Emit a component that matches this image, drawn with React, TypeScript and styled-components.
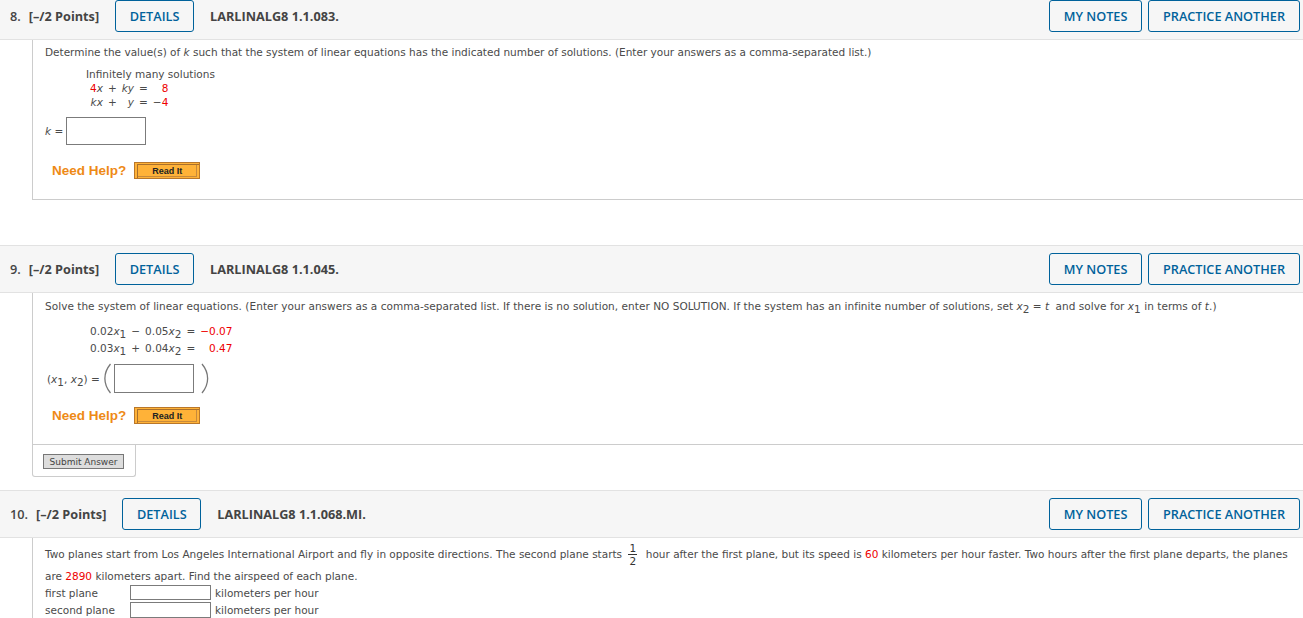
import React from 'react';
import styled, { createGlobalStyle } from 'styled-components';

const GlobalStyle = createGlobalStyle`
    html, body {
        margin: 0;
        padding: 0;
        height: 618px;
        overflow: hidden;
        background: #fff;
    }
`;

const Page = styled.main`
    margin-top: -8px;
    font-family: 'DejaVu Sans', Verdana, sans-serif;
    font-size: 10.5px;
    color: #4a4a4a;
`;

const Question = styled.section<{ $gap: number }>`
    margin-bottom: ${(p) => p.$gap}px;
`;

const Header = styled.header`
    display: flex;
    align-items: center;
    height: 46px;
    padding: 0 3px 0 10px;
    background: #f6f6f6;
    border-top: 1px solid #e2e2e2;
    border-bottom: 1px solid #e2e2e2;
    font-family: 'Open Sans', sans-serif;
    font-size: 12.7px;
    color: #444;
`;

const Number = styled.span`
    font-weight: 600;
    margin-right: 8px;
`;

const Points = styled.span`
    font-weight: 700;
    margin-right: 16px;
`;

const OutlineButton = styled.button<{ $pad?: number }>`
    height: 32px;
    padding: 0 ${(p) => p.$pad ?? 13.6}px;
    background: transparent;
    border: 1px solid #00629b;
    border-radius: 3px;
    color: #00629b;
    font-family: 'Open Sans', sans-serif;
    font-size: 12.7px;
    font-weight: 600;
`;

const Code = styled.span`
    font-weight: 700;
    margin-left: 16px;
    color: #444;
`;

const Actions = styled.div`
    display: flex;
    gap: 6px;
    margin-left: auto;
`;

const Body = styled.div<{ $height: number; $closed?: boolean }>`
    display: flow-root;
    margin-left: 32px;
    height: ${(p) => p.$height}px;
    padding: 0 12px;
    border-left: 1px solid #ccc;
    border-bottom: ${(p) => (p.$closed ? '1px solid #ccc' : 'none')};
`;

const Prompt = styled.p<{ $top: number; $track?: number }>`
    margin: ${(p) => p.$top}px 0 0;
    line-height: 13px;
    letter-spacing: ${(p) => p.$track ?? 0}px;
    white-space: nowrap;
`;

const Lead = styled.p`
    margin: 8px 0 0 41px;
    line-height: 14px;
`;

const Equations = styled.div<{ $top: number; $row: number }>`
    display: grid;
    width: max-content;
    margin: ${(p) => p.$top}px 0 0 45px;
    grid-template-columns: repeat(5, auto);
    grid-auto-rows: ${(p) => p.$row}px;
    column-gap: 5px;
    align-items: center;
    justify-items: end;
    white-space: nowrap;
`;

const Red = styled.span`
    color: #ee0000;
`;

const V = styled.i<{ $after?: number }>`
    font-style: italic;
    margin-right: ${(p) => p.$after ?? 0}px;
`;

const Sub = styled.sub`
    font-size: 10.5px;
    line-height: 0;
    vertical-align: -3px;
`;

const AnswerRow = styled.div<{ $top: number }>`
    display: flex;
    align-items: center;
    margin-top: ${(p) => p.$top}px;
`;

const AnswerLabel = styled.span<{ $indent?: number }>`
    margin: 0 3px 0 ${(p) => p.$indent ?? 0}px;
`;

const TextBox = styled.input<{ $w: number; $h: number }>`
    box-sizing: border-box;
    width: ${(p) => p.$w}px;
    height: ${(p) => p.$h}px;
    margin: 0;
    padding: 0;
    background: #fff;
    border: 1px solid #7b7b7b;
`;

const Paren = styled.svg`
    flex: none;
    display: block;
`;

const HelpRow = styled.div<{ $top: number }>`
    display: flex;
    align-items: center;
    gap: 8px;
    margin: ${(p) => p.$top}px 0 0 7px;
`;

const NeedHelp = styled.span`
    font-family: 'Liberation Sans', Arial, sans-serif;
    font-size: 13.5px;
    font-weight: 700;
    color: #ee8a16;
`;

const ReadIt = styled.button`
    box-sizing: border-box;
    width: 66px;
    height: 17px;
    padding: 0;
    background: #ffb238;
    border: 1px solid #b9772a;
    box-shadow: inset 2px 1px 0 #ffb238, inset 3px 2px 0 #a9702c, inset -2px -1px 0 #ffb238, inset -3px -2px 0 #c78a3c;
    font-family: 'Liberation Sans', Arial, sans-serif;
    font-size: 9px;
    font-weight: 700;
    color: #222;
`;

const SubmitBar = styled.div`
    box-sizing: border-box;
    margin-left: 32px;
    width: 104px;
    height: 32px;
    padding: 9px 0 0 10px;
    border: 1px solid #ccc;
    border-top: none;
    border-radius: 0 0 3px 3px;
`;

const SubmitButton = styled.button`
    box-sizing: border-box;
    display: block;
    width: 81px;
    height: 15px;
    padding: 0;
    background: #ddd;
    border: 1px solid #777;
    font-family: 'DejaVu Sans', Verdana, sans-serif;
    font-size: 9px;
    color: #444;
`;

const Fraction = styled.span`
    display: inline-flex;
    flex-direction: column;
    align-items: center;
    width: 9px;
    margin: 0 5px 0 3px;
    vertical-align: middle;
    line-height: 12px;
    color: #333;
`;

const Numerator = styled.span`
    width: 100%;
    text-align: center;
    border-bottom: 1px solid #333;
`;

const UnitRow = styled.div<{ $top: number }>`
    display: grid;
    grid-template-columns: 85px 81px auto;
    align-items: center;
    margin-top: ${(p) => p.$top}px;
`;

const Unit = styled.span`
    margin-left: 4px;
`;

function QuestionHeader({ n, code }: { n: string; code: string }) {
    return (
        <Header>
            <Number>{n}</Number>
            <Points>[–/2 Points]</Points>
            <OutlineButton>DETAILS</OutlineButton>
            <Code>{code}</Code>
            <Actions>
                <OutlineButton>MY NOTES</OutlineButton>
                <OutlineButton $pad={14}>PRACTICE ANOTHER</OutlineButton>
            </Actions>
        </Header>
    );
}

function Help({ top }: { top: number }) {
    return (
        <HelpRow $top={top}>
            <NeedHelp>Need Help?</NeedHelp>
            <ReadIt>Read It</ReadIt>
        </HelpRow>
    );
}

export default function App() {
    return (
        <Page>
            <GlobalStyle />
            <Question $gap={45}>
                <QuestionHeader n="8." code="LARLINALG8 1.1.083." />
                <Body $height={159} $closed>
                    <Prompt $top={6}>
                        Determine the value(s) of <V>k</V> such that the system of linear equations has the indicated number of solutions. (Enter your answers as a comma-separated list.)
                    </Prompt>
                    <Lead>Infinitely many solutions</Lead>
                    <Equations $top={0} $row={14}>
                        <span><Red>4</Red><V>x</V></span><span>+</span><span><V>ky</V></span><span>=</span><Red>8</Red>
                        <span><V>kx</V></span><span>+</span><span><V>y</V></span><span>=</span><span>−<Red>4</Red></span>
                    </Equations>
                    <AnswerRow $top={8}>
                        <AnswerLabel><V>k</V> =</AnswerLabel>
                        <TextBox $w={80} $h={28} />
                    </AnswerRow>
                    <Help top={17} />
                </Body>
            </Question>

            <Question $gap={13}>
                <QuestionHeader n="9." code="LARLINALG8 1.1.045." />
                <Body $height={151} $closed>
                    <Prompt $top={7} $track={0.04}>
                        Solve the system of linear equations. (Enter your answers as a comma-separated list. If there is no solution, enter NO SOLUTION. If the system has an infinite number of solutions, set <V>x</V><Sub>2</Sub> = <V $after={3}>t</V> and solve for <V>x</V><Sub>1</Sub> in terms of <V>t</V>.)
                    </Prompt>
                    <Equations $top={9} $row={17}>
                        <span>0.02<V>x</V><Sub>1</Sub></span><span>−</span><span>0.05<V>x</V><Sub>2</Sub></span><span>=</span><Red>−0.07</Red>
                        <span>0.03<V>x</V><Sub>1</Sub></span><span>+</span><span>0.04<V>x</V><Sub>2</Sub></span><span>=</span><Red>0.47</Red>
                    </Equations>
                    <AnswerRow $top={7}>
                        <AnswerLabel $indent={2}>(<V>x</V><Sub>1</Sub>, <V>x</V><Sub>2</Sub>) =</AnswerLabel>
                        <Paren width="11" height="31" viewBox="0 0 11 31">
                            <path d="M7.5 1 C0 10 0 21 7.5 30" fill="none" stroke="#777" strokeWidth="1.3" />
                        </Paren>
                        <TextBox $w={80} $h={29} />
                        <Paren width="15" height="31" viewBox="0 0 15 31">
                            <path d="M8 1 C15.5 10 15.5 21 8 30" fill="none" stroke="#777" strokeWidth="1.3" />
                        </Paren>
                    </AnswerRow>
                    <Help top={13} />
                </Body>
                <SubmitBar>
                    <SubmitButton>Submit Answer</SubmitButton>
                </SubmitBar>
            </Question>

            <Question $gap={0}>
                <QuestionHeader n="10." code="LARLINALG8 1.1.068.MI." />
                <Body $height={80}>
                    <Prompt $top={4}>
                        Two planes start from Los Angeles International Airport and fly in opposite directions. The second plane starts <Fraction><Numerator>1</Numerator>2</Fraction> hour after the first plane, but its speed is <Red>60</Red> kilometers per hour faster. Two hours after the first plane departs, the planes
                    </Prompt>
                    <Prompt $top={3}>
                        are <Red>2890</Red> kilometers apart. Find the airspeed of each plane.
                    </Prompt>
                    <UnitRow $top={2}>
                        <span>first plane</span>
                        <TextBox $w={81} $h={15} />
                        <Unit>kilometers per hour</Unit>
                    </UnitRow>
                    <UnitRow $top={2}>
                        <span>second plane</span>
                        <TextBox $w={81} $h={16} />
                        <Unit>kilometers per hour</Unit>
                    </UnitRow>
                </Body>
            </Question>
        </Page>
    );
}
